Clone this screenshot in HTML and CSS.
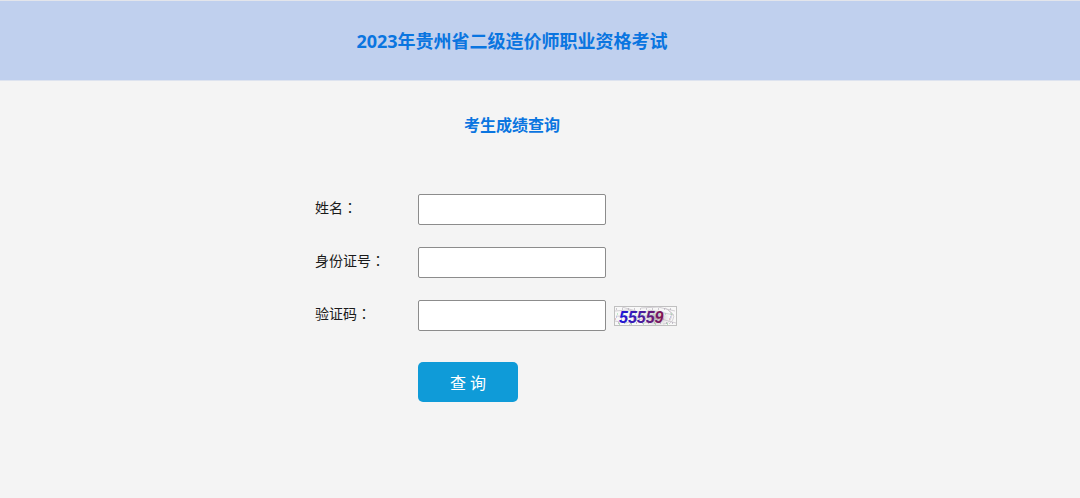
FILE: index.html
```html
<!DOCTYPE html>
<html lang="zh-CN">
<head>
<meta charset="utf-8">
<meta name="viewport" content="width=device-width, initial-scale=1">
<title>考生成绩查询</title>
<link rel="stylesheet" href="styles.css">
</head>
<body>
<header class="banner">
  <h1 class="banner-title">2023年贵州省二级造价师职业资格考试</h1>
</header>
<main class="content">
  <h2 class="section-title">考生成绩查询</h2>
  <form class="query-form">
    <div class="row">
      <label class="label" for="name">姓名<span class="colon" lang="zh-TW">：</span></label>
      <input class="field" id="name" type="text">
    </div>
    <div class="row">
      <label class="label" for="idno">身份证号<span class="colon" lang="zh-TW">：</span></label>
      <input class="field" id="idno" type="text">
    </div>
    <div class="row">
      <label class="label" for="code">验证码<span class="colon" lang="zh-TW">：</span></label>
      <input class="field" id="code" type="text">
      <svg class="captcha" viewBox="0 0 63 20" role="img" aria-label="55559">
        <defs>
          <linearGradient id="ink" gradientUnits="userSpaceOnUse" x1="5" y1="0" x2="52" y2="0">
            <stop offset="0" stop-color="#1c14dc"/>
            <stop offset="0.5" stop-color="#4a1c9c"/>
            <stop offset="1" stop-color="#8c1444"/>
          </linearGradient>
          <radialGradient id="smudge">
            <stop offset="0" stop-color="#8c8488" stop-opacity="0.7"/>
            <stop offset="1" stop-color="#b4b0b2" stop-opacity="0"/>
          </radialGradient>
        </defs>
        <rect x="0.5" y="0.5" width="62" height="19" fill="#f8f8f8" stroke="#c0c0c0"/>
        <ellipse cx="42" cy="12" rx="14" ry="9" fill="url(#smudge)"/>
        <g fill="none" stroke="#c8c3c9" stroke-width="0.8">
          <path d="M1 5L14 4L30 7M1 15L12 17L28 13M8 1L22 5M15 19L35 4L60 9M27 2L44 1L61 5M30 17L47 13L62 17M2 10L20 11L43 9"/>
          <path d="M51 2Q59 6 57 12T49 18M54 4Q65 10 55 18"/>
        </g>
        <g stroke-width="1" stroke-dasharray="1 5">
          <path d="M2 3H60" stroke="#a09aa6"/>
          <path d="M3 8H61" stroke="#8fd8a0"/>
          <path d="M1 13H61" stroke="#d08c9a"/>
          <path d="M4 17H61" stroke="#968ea0"/>
          <path d="M2 11H62" stroke="#9aa4de" stroke-dasharray="1 8"/>
          <path d="M5 18H62" stroke="#72ca86" stroke-dasharray="1 11"/>
        </g>
        <text class="captcha-text" x="5" y="17" fill="url(#ink)">55559</text>
      </svg>
    </div>
    <div class="actions">
      <button class="submit" type="submit">查 询</button>
    </div>
  </form>
</main>
</body>
</html>
```
FILE: styles.css
```css
* {
  box-sizing: border-box;
}

body {
  margin: 0;
  background: #f4f4f4;
  color: #1a1a1a;
  font-family: "Noto Sans", "Noto Sans CJK SC", sans-serif;
  font-size: 14px;
}

.banner {
  padding: 24px 56px 23px 0;
  border-top: 1px solid #e3e5eb;
  border-bottom: 1px solid #dde3ef;
  background: #c0d0ee;
}

.banner-title,
.section-title {
  margin: 0;
  color: #0a75e0;
  font-weight: 700;
  line-height: 32px;
  text-align: center;
}

.banner-title {
  font-size: 18px;
}

.section-title {
  font-size: 16px;
}

.content {
  padding: 28px 56px 32px 0;
}

.query-form {
  display: flex;
  flex-direction: column;
  gap: 22px;
  max-width: 394px;
  margin: 53px auto 0;
}

.row {
  display: flex;
  align-items: center;
}

.label {
  flex: 0 0 103px;
  align-self: flex-start;
  line-height: 26px;
}

.colon {
  font-family: "Noto Sans CJK TC", sans-serif;
}

.field {
  width: 188px;
  height: 31px;
  padding: 0 8px;
  border: 1px solid #8c8c8c;
  border-radius: 2px;
  background: #fff;
  font: inherit;
}

.captcha {
  flex: none;
  width: 63px;
  height: 20px;
  margin-left: 8px;
}

.captcha-text {
  font: italic bold 16px "Liberation Sans", sans-serif;
}

.actions {
  padding: 9px 0 0 103px;
}

.submit {
  width: 100px;
  height: 40px;
  border: 0;
  border-radius: 5px;
  background: #0f9bd8;
  color: #fff;
  font: inherit;
  font-size: 16px;
}
```
